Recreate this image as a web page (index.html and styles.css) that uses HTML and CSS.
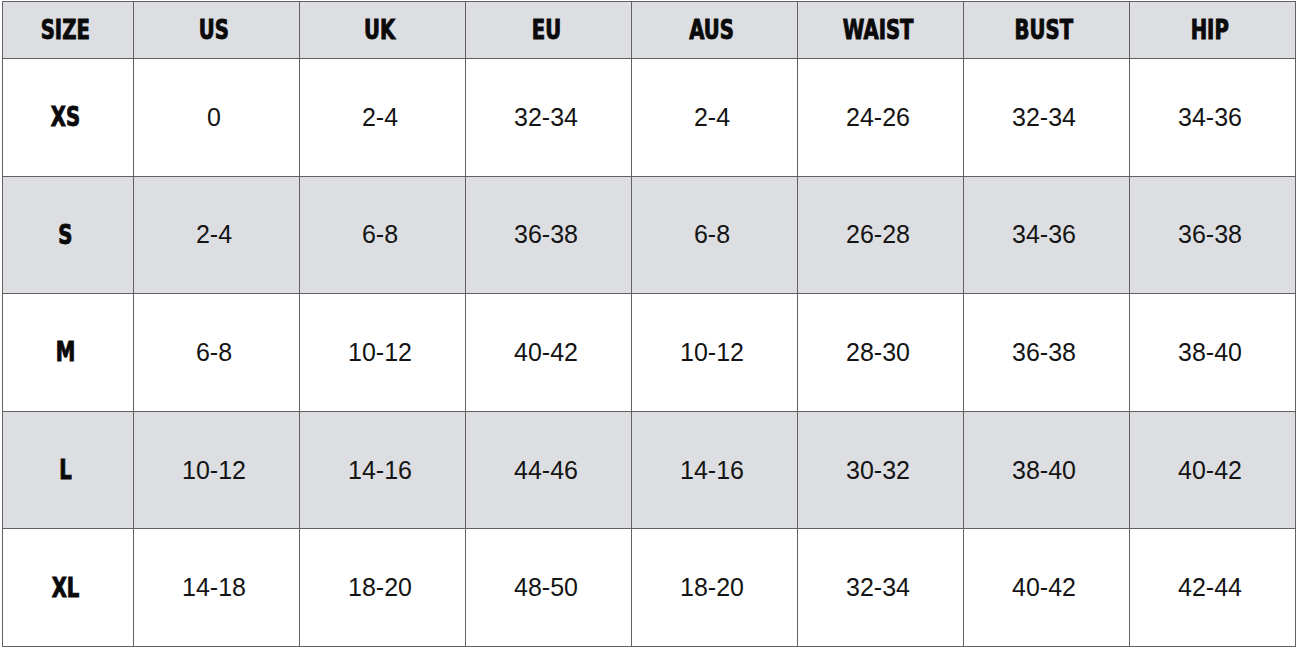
FILE: index.html
```html
<!DOCTYPE html>
<html>
<head>
<meta charset="utf-8">
<link rel="stylesheet" href="styles.css">
</head>
<body>
<div class="chart">
  <div class="cell head"><span class="bold">SIZE</span></div><div class="cell head"><span class="bold">US</span></div><div class="cell head"><span class="bold">UK</span></div><div class="cell head"><span class="bold">EU</span></div><div class="cell head"><span class="bold">AUS</span></div><div class="cell head"><span class="bold">WAIST</span></div><div class="cell head"><span class="bold">BUST</span></div><div class="cell head"><span class="bold">HIP</span></div>

  <div class="cell"><span class="bold">XS</span></div><div class="cell">0</div><div class="cell">2-4</div><div class="cell">32-34</div><div class="cell">2-4</div><div class="cell">24-26</div><div class="cell">32-34</div><div class="cell">34-36</div>

  <div class="cell alt"><span class="bold">S</span></div><div class="cell alt">2-4</div><div class="cell alt">6-8</div><div class="cell alt">36-38</div><div class="cell alt">6-8</div><div class="cell alt">26-28</div><div class="cell alt">34-36</div><div class="cell alt">36-38</div>

  <div class="cell"><span class="bold">M</span></div><div class="cell">6-8</div><div class="cell">10-12</div><div class="cell">40-42</div><div class="cell">10-12</div><div class="cell">28-30</div><div class="cell">36-38</div><div class="cell">38-40</div>

  <div class="cell alt"><span class="bold">L</span></div><div class="cell alt">10-12</div><div class="cell alt">14-16</div><div class="cell alt">44-46</div><div class="cell alt">14-16</div><div class="cell alt">30-32</div><div class="cell alt">38-40</div><div class="cell alt">40-42</div>

  <div class="cell"><span class="bold">XL</span></div><div class="cell">14-18</div><div class="cell">18-20</div><div class="cell">48-50</div><div class="cell">18-20</div><div class="cell">32-34</div><div class="cell">40-42</div><div class="cell">42-44</div>
</div>
</body>
</html>
```

FILE: styles.css
```css
html, body {
  margin: 0;
  padding: 0;
  background: #ffffff;
}

.chart {
  margin: 1px 0 0 2px;
  width: 1294px;
  height: 646px;
  box-sizing: border-box;
  padding: 1px;
  gap: 1px;
  background: #626262;
  display: grid;
  grid-template-columns: 130px repeat(7, 165px);
  grid-template-rows: 56px repeat(5, 1fr);
}

.cell {
  background: #ffffff;
  display: flex;
  align-items: center;
  justify-content: center;
  padding-right: 5px;
  font-family: "Liberation Sans", Arial, sans-serif;
  font-size: 25px;
  color: #141414;
}

.cell.alt,
.cell.head {
  background: #dddee1;
}

.bold {
  display: inline-block;
  font-family: "DejaVu Sans Condensed", "DejaVu Sans", sans-serif;
  font-weight: bold;
  font-size: 26px;
  color: #0a0a0a;
  -webkit-text-stroke: 0.9px #0a0a0a;
  transform: scaleX(0.84);
}
```
